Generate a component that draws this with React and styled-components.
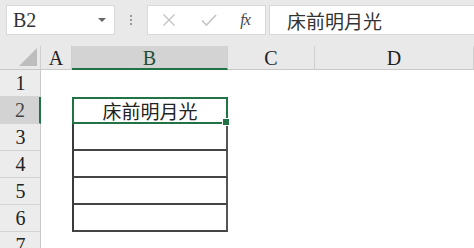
import styled, { createGlobalStyle } from "styled-components"

const GlobalStyle = createGlobalStyle`
  html, body {
    margin: 0;
    padding: 0;
    background: #ffffff;
    overflow: hidden;
  }
  body {
    font-family: "Liberation Serif", "DejaVu Serif", serif;
  }
`

const GREEN = "#217346"
const SERIF = `"Liberation Serif", "DejaVu Serif", serif`
const CJK = `"Noto Sans CJK SC", "Noto Sans", sans-serif`

const Window = styled.div`
  width: 474px;
  height: 248px;
  display: flex;
  flex-direction: column;
  background: #ffffff;
  overflow: hidden;
`

const Toolbar = styled.div`
  flex: 0 0 46px;
  height: 46px;
  box-sizing: border-box;
  padding: 5px 0 0 6px;
  background: #e9e9e9;
  display: flex;
  align-items: flex-start;
`

const Field = styled.div`
  height: 30px;
  box-sizing: border-box;
  background: #ffffff;
  border: 1px solid #d8d8d8;
  display: flex;
  align-items: center;
`

const NameBox = styled(Field)`
  width: 109px;
  padding: 0 8px 0 6px;
  justify-content: space-between;
  font-family: ${SERIF};
  font-size: 20px;
  color: #333;
`

const Caret = styled.span`
  width: 0;
  height: 0;
  border-left: 4px solid transparent;
  border-right: 4px solid transparent;
  border-top: 4px solid #666;
`

const Grip = styled.div`
  width: 32px;
  height: 30px;
  display: flex;
  flex-direction: column;
  align-items: center;
  justify-content: center;
  gap: 2px;

  span {
    width: 2px;
    height: 2px;
    background: #9a9a9a;
  }
`

const ButtonBox = styled(Field)`
  width: 119px;
  justify-content: space-around;
  padding: 0 4px 0 2px;
`

const Fx = styled.span`
  font-family: ${SERIF};
  font-style: italic;
  font-size: 16px;
  color: #444;
  letter-spacing: -1px;
`

const FormulaInput = styled(Field)`
  flex: 1;
  margin-left: 3px;
  border-right: none;
  padding-left: 17px;
  font-family: ${CJK};
  font-size: 19px;
  color: #333;
`

const Sheet = styled.div`
  flex: 1 1 auto;
  min-height: 0;
  overflow: hidden;
  display: grid;
  grid-template-columns: 41px 31px 156px 87px 1fr;
  grid-template-rows: 24px repeat(7, 27px);
`

const Corner = styled.div`
  background: #e9e9e9;
  border-right: 1px solid #d0d0d0;
  border-bottom: 1px solid #c8c8c8;
  display: flex;
  align-items: flex-end;
  justify-content: flex-end;
  padding: 0 3px 3px 0;

  svg {
    display: block;
  }
`

const ColHead = styled.div`
  background: ${(p) => (p.$active ? "#d3d3d3" : "#e9e9e9")};
  border-right: 1px solid #d0d0d0;
  border-bottom: ${(p) => (p.$active ? `2px solid ${GREEN}` : "1px solid #c8c8c8")};
  display: flex;
  align-items: center;
  justify-content: center;
  font-family: ${SERIF};
  font-size: 20px;
  color: ${(p) => (p.$active ? "#1f4e35" : "#222")};
  padding-top: 2px;
`

const RowHead = styled.div`
  background: ${(p) => (p.$active ? "#d3d3d3" : "#ececec")};
  border-right: ${(p) => (p.$active ? `2px solid ${GREEN}` : "1px solid #c8c8c8")};
  border-bottom: 1px solid #d4d4d4;
  display: flex;
  align-items: center;
  justify-content: center;
  font-family: ${SERIF};
  font-size: 20px;
  color: ${(p) => (p.$active ? "#444" : "#222")};
  padding-left: 1px;
`

const Cell = styled.div`
  position: relative;
  background: #ffffff;
  display: flex;
  align-items: center;
  justify-content: center;
  box-sizing: border-box;
  font-family: ${CJK};
  font-size: 19px;
  color: #222;
  border-left: ${(p) => (p.$boxed ? "2px solid #3a3a3a" : "none")};
  border-right: ${(p) => (p.$boxed ? "2px solid #555" : "none")};
  border-bottom: ${(p) => (p.$boxed ? "2px solid #444" : "none")};

  ${(p) =>
    p.$selected &&
    `
    border: 2px solid ${GREEN};
  `}
`

const Handle = styled.span`
  position: absolute;
  right: -4px;
  bottom: -4px;
  width: 6px;
  height: 6px;
  background: ${GREEN};
  border: 1px solid #ffffff;
  z-index: 2;
`

const CloseIcon = () => (
  <svg width="16" height="16" viewBox="0 0 16 16">
    <path d="M2.5 2.5 L13.5 13.5 M13.5 2.5 L2.5 13.5" stroke="#c4c4c4" strokeWidth="1.4" fill="none" />
  </svg>
)

const CheckIcon = () => (
  <svg width="18" height="16" viewBox="0 0 18 16">
    <path d="M2 8.5 L6.5 13 L16 3" stroke="#c4c4c4" strokeWidth="1.6" fill="none" />
  </svg>
)

const columns = ["A", "B", "C", "D"]
const rows = [1, 2, 3, 4, 5, 6, 7]

export default function App() {
  return (
    <>
      <GlobalStyle />
      <Window>
        <Toolbar>
          <NameBox>
            B2
            <Caret />
          </NameBox>
          <Grip>
            <span />
            <span />
            <span />
          </Grip>
          <ButtonBox>
            <CloseIcon />
            <CheckIcon />
            <Fx>fx</Fx>
          </ButtonBox>
          <FormulaInput>床前明月光</FormulaInput>
        </Toolbar>

        <Sheet>
          <Corner>
            <svg width="18" height="18" viewBox="0 0 18 18">
              <path d="M18 0 L18 18 L0 18 Z" fill="#bdbdbd" />
            </svg>
          </Corner>
          {columns.map((c) => (
            <ColHead key={c} $active={c === "B"}>
              {c}
            </ColHead>
          ))}

          {rows.map((r) => {
            const boxed = r >= 2 && r <= 6
            return [
              <RowHead key={`h${r}`} $active={r === 2}>
                {r}
              </RowHead>,
              <Cell key={`a${r}`} />,
              <Cell key={`b${r}`} $boxed={boxed} $selected={r === 2}>
                {r === 2 && "床前明月光"}
                {r === 2 && <Handle />}
              </Cell>,
              <Cell key={`c${r}`} />,
              <Cell key={`d${r}`} />,
            ]
          })}
        </Sheet>
      </Window>
    </>
  )
}
